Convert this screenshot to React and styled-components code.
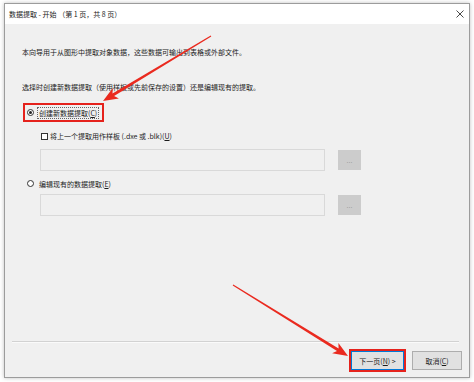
import React from 'react';
import styled, { createGlobalStyle } from 'styled-components';

const GlobalStyle = createGlobalStyle`
  html, body {
    margin: 0;
    padding: 0;
    background: #ffffff;
  }
  body {
    font-family: "Noto Sans CJK SC", "Noto Sans", "Liberation Sans", sans-serif;
    color: #1b1b1b;
  }
`;

const Page = styled.div`
  position: relative;
  width: 474px;
  height: 382px;
  overflow: hidden;
`;

const Window = styled.div`
  box-sizing: border-box;
  margin: 3px 0 0 4px;
  width: 466px;
  height: 375px;
  border: 1px solid #9c9c9c;
  box-shadow: 0 0 4px rgba(0, 0, 0, 0.25);
  display: flex;
  flex-direction: column;
  background: #f0f0f0;
`;

const TitleBar = styled.div`
  height: 20px;
  background: #ffffff;
  display: flex;
  align-items: center;
  justify-content: space-between;
  padding: 0 5px 0 4px;
  font-size: 7px;
  line-height: 10px;
`;

const CloseIcon = () => (
  <svg width="8" height="8" viewBox="0 0 8 8">
    <path d="M0.5 0.5 L7.5 7.5 M7.5 0.5 L0.5 7.5" stroke="#333" strokeWidth="0.9" />
  </svg>
);

const Content = styled.div`
  flex: 1;
  display: flex;
  flex-direction: column;
  padding: 23px 0 0 17px;
`;

const Paragraph = styled.p`
  margin: ${({ gap }) => gap || 0}px 0 0 0;
  font-size: 7px;
  line-height: 10px;
`;

const OptionRow = styled.label`
  align-self: flex-start;
  display: inline-flex;
  align-items: center;
  gap: 3px;
  height: 19px;
  box-sizing: border-box;
  padding: 0 3px 0 2px;
  margin: ${({ gap }) => gap}px 0 0 1px;
  border: 2px solid ${({ highlighted }) => (highlighted ? '#e5221c' : 'transparent')};
  font-size: 7px;
  line-height: 10px;
`;

const Radio = styled.span`
  box-sizing: border-box;
  width: 7px;
  height: 7px;
  border-radius: 50%;
  border: 1px solid #333;
  background: #fff;
  display: flex;
  align-items: center;
  justify-content: center;

  &::after {
    content: '';
    width: 3px;
    height: 3px;
    border-radius: 50%;
    background: ${({ checked }) => (checked ? '#222' : 'transparent')};
  }
`;

const OptionText = styled.span`
  padding: 0 1px;
  border: 1px ${({ focused }) => (focused ? 'dotted #666' : 'solid transparent')};
`;

const CheckRow = styled.label`
  display: flex;
  align-items: center;
  gap: 2px;
  height: 10px;
  margin: 9px 0 0 19px;
  font-size: 7px;
  line-height: 10px;
`;

const Checkbox = styled.span`
  box-sizing: border-box;
  width: 7px;
  height: 7px;
  border: 1px solid #333;
  background: #fff;
`;

const PathRow = styled.div`
  display: flex;
  align-items: center;
  gap: 13px;
  margin: ${({ gap }) => gap}px 0 0 18px;
`;

const PathInput = styled.div`
  box-sizing: border-box;
  width: 285px;
  height: 22px;
  border: 1px solid #d9d9d9;
  background: #f0f0f0;
`;

const BrowseButton = styled.div`
  width: 23px;
  height: 20px;
  background: #cccccc;
  color: #8c8c8c;
  font-size: 7px;
  display: flex;
  align-items: center;
  justify-content: center;
  font-family: "Liberation Sans", sans-serif;
`;

const Footer = styled.div`
  display: flex;
  flex-direction: column;
`;

const Separator = styled.div`
  margin: 0 10px 0 7px;
  height: 1px;
  background: #d2d2d2;
  border-bottom: 1px solid #fafafa;
`;

const ButtonRow = styled.div`
  display: flex;
  justify-content: flex-end;
  gap: 8px;
  padding: 8px 7px 7px 0;
`;

const Button = styled.div`
  box-sizing: border-box;
  width: ${({ w }) => w}px;
  height: 19px;
  background: #e1e1e1;
  border: 1px solid ${({ primary }) => (primary ? '#0078d7' : '#adadad')};
  outline: ${({ highlighted }) => (highlighted ? '2px solid #e5221c' : 'none')};
  display: flex;
  align-items: center;
  justify-content: center;
  font-size: 7px;
  line-height: 10px;
`;

const Overlay = styled.svg`
  position: absolute;
  top: 0;
  left: 0;
  pointer-events: none;
`;

// tapered arrow polygon from tail to tip
const arrowPoints = (x1, y1, x2, y2) => {
  const headLen = 15;
  const headW = 12;
  const neckW = 3;
  const tailW = 1;
  const dx = x2 - x1;
  const dy = y2 - y1;
  const len = Math.hypot(dx, dy);
  const ux = dx / len;
  const uy = dy / len;
  const nx = -uy;
  const ny = ux;
  const bx = x2 - ux * headLen;
  const by = y2 - uy * headLen;
  const nbx = x2 - ux * (headLen - 3);
  const nby = y2 - uy * (headLen - 3);
  const p = (x, y) => `${x.toFixed(1)},${y.toFixed(1)}`;
  return [
    p(x1 + (nx * tailW) / 2, y1 + (ny * tailW) / 2),
    p(nbx + (nx * neckW) / 2, nby + (ny * neckW) / 2),
    p(bx + (nx * headW) / 2, by + (ny * headW) / 2),
    p(x2, y2),
    p(bx - (nx * headW) / 2, by - (ny * headW) / 2),
    p(nbx - (nx * neckW) / 2, nby - (ny * neckW) / 2),
    p(x1 - (nx * tailW) / 2, y1 - (ny * tailW) / 2),
  ].join(' ');
};

const Arrows = () => (
  <Overlay width="474" height="382" viewBox="0 0 474 382">
    <polygon points={arrowPoints(211, 36, 103, 101)} fill="#ea2a1f" />
    <polygon points={arrowPoints(233, 285, 348, 356)} fill="#ea2a1f" />
  </Overlay>
);

const App = () => (
  <Page>
    <GlobalStyle />
    <Window>
      <TitleBar>
        <span>数据提取 - 开始 （第 1 页，共 8 页）</span>
        <CloseIcon />
      </TitleBar>
      <Content>
        <Paragraph>本向导用于从图形中提取对象数据，这些数据可输出到表格或外部文件。</Paragraph>
        <Paragraph gap={25}>选择时创建新数据提取（使用样板或先前保存的设置）还是编辑现有的提取。</Paragraph>

        <OptionRow gap={11} highlighted>
          <Radio checked />
          <OptionText focused>
            创建新数据提取(<u>C</u>)
          </OptionText>
        </OptionRow>
        <CheckRow>
          <Checkbox />
          <span>
            将上一个提取用作样板 (.dxe 或 .blk)(<u>U</u>)
          </span>
        </CheckRow>
        <PathRow gap={8}>
          <PathInput />
          <BrowseButton>...</BrowseButton>
        </PathRow>

        <OptionRow gap={3}>
          <Radio />
          <OptionText>
            编辑现有的数据提取(<u>E</u>)
          </OptionText>
        </OptionRow>
        <PathRow gap={1}>
          <PathInput />
          <BrowseButton>...</BrowseButton>
        </PathRow>
      </Content>
      <Footer>
        <Separator />
        <ButtonRow>
          <Button w={53} primary highlighted>
            下一页(<u>N</u>) &gt;
          </Button>
          <Button w={50}>
            取消(<u>C</u>)
          </Button>
        </ButtonRow>
      </Footer>
    </Window>
    <Arrows />
  </Page>
);

export default App;
